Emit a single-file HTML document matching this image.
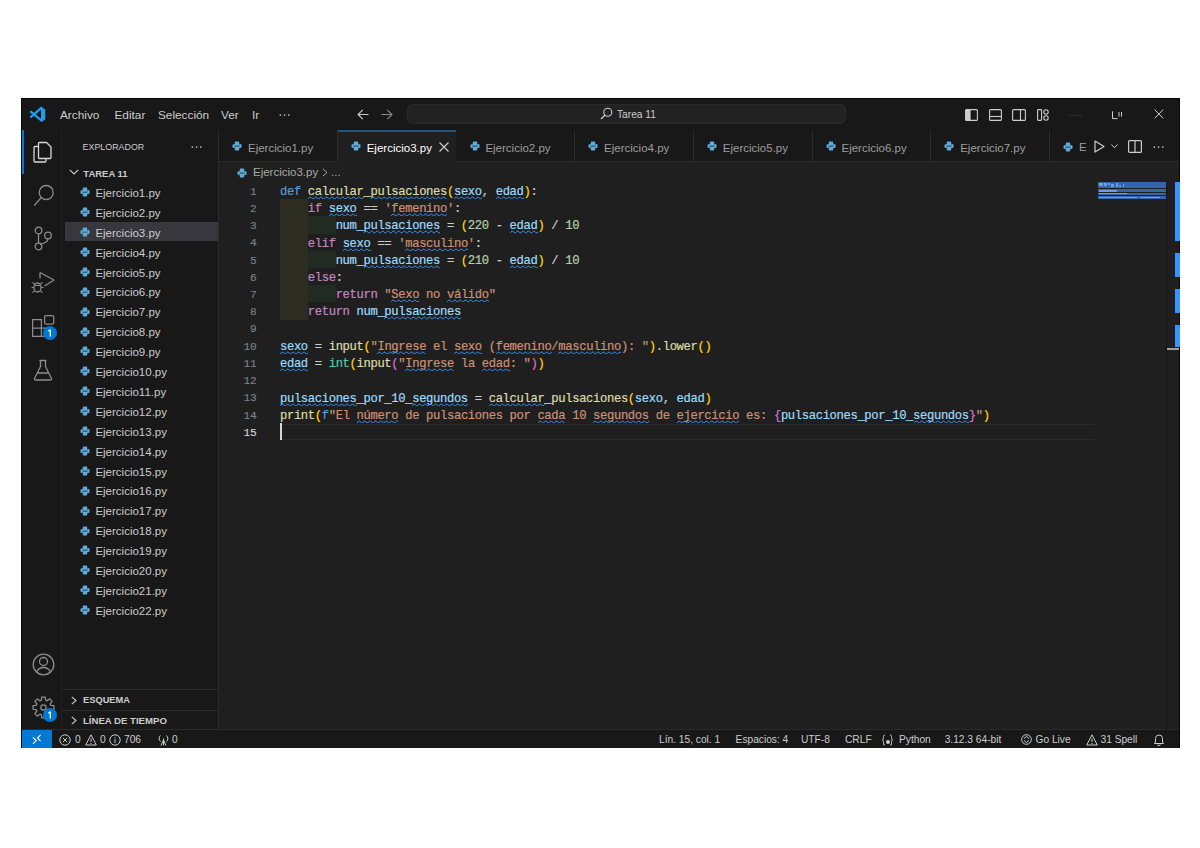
<!DOCTYPE html><html><head><meta charset="utf-8"><style>
*{margin:0;padding:0;box-sizing:border-box}
html,body{width:1200px;height:848px;background:#fff;overflow:hidden;position:relative}
body{font-family:"Liberation Sans",sans-serif;color:#cccccc}
.a{position:absolute}
.t{position:absolute;white-space:pre;line-height:1}
.code{position:absolute;white-space:pre;font-family:"Liberation Mono",monospace;font-size:12.2px;letter-spacing:-0.358px;line-height:17.21px;height:17.21px;-webkit-text-stroke:0.2px currentColor}
.sq{text-decoration:underline wavy #3794ff;text-decoration-thickness:1px;text-underline-offset:2px}
svg{position:absolute;overflow:visible}
.ln{font-size:11.2px;letter-spacing:-0.22px;-webkit-text-stroke:0.15px currentColor}
</style></head><body><div class="a" style="left:21px;top:98px;width:1159px;height:650px;background:#181818;border:1px solid #070707"></div><div class="a" style="left:219px;top:130px;width:960px;height:600px;background:#1f1f1f;"></div><div class="a" style="left:219px;top:130px;width:960px;height:32px;background:#181818;border-bottom:1px solid #2b2b2b"></div><div class="a" style="left:61px;top:130px;width:1px;height:600px;background:#202020;"></div><div class="a" style="left:218px;top:130px;width:1px;height:600px;background:#2b2b2b;"></div><div class="a" style="left:22px;top:729px;width:1157px;height:19px;background:#181818;border-top:1px solid #2b2b2b"></div><div class="a" style="left:22px;top:730px;width:30px;height:18px;background:#0078d4;"></div><svg style="left:25px;top:102px" width="30" height="25" viewBox="0 0 30 25"><path d="M16 5.3L20.2 7.2V17.8L16 19.7z" fill="#1f9cf0"/><path d="M6 9.8L16.6 18.7M6 14.8L16.4 5.8" stroke="#1f9cf0" stroke-width="2.2" stroke-linecap="round"/></svg><div class="t" style="left:60px;top:109.96px;font-size:11.8px;color:#cccccc;font-weight:400;letter-spacing:0px;">Archivo</div><div class="t" style="left:114.5px;top:109.96px;font-size:11.8px;color:#cccccc;font-weight:400;letter-spacing:0px;">Editar</div><div class="t" style="left:158px;top:109.96px;font-size:11.8px;color:#cccccc;font-weight:400;letter-spacing:0px;">Selección</div><div class="t" style="left:221px;top:109.96px;font-size:11.8px;color:#cccccc;font-weight:400;letter-spacing:0px;">Ver</div><div class="t" style="left:252px;top:109.96px;font-size:11.8px;color:#cccccc;font-weight:400;letter-spacing:0px;">Ir</div><svg style="left:278.5px;top:112.5px" width="11.1" height="4" viewBox="0 0 11.1 4"><circle cx="1.35" cy="2" r="0.85" fill="#cccccc"/><circle cx="5.550000000000001" cy="2" r="0.85" fill="#cccccc"/><circle cx="9.75" cy="2" r="0.85" fill="#cccccc"/></svg><svg style="left:357px;top:109px" width="12" height="11" viewBox="0 0 12 11"><path d="M11.5 5.5H1M5.8 0.8L1 5.5l4.8 4.7" stroke="#cccccc" stroke-width="1.1" fill="none"/></svg><svg style="left:381px;top:109px" width="12" height="11" viewBox="0 0 12 11"><path d="M0.5 5.5H11M6.2 0.8L11 5.5l-4.8 4.7" stroke="#8a8a8a" stroke-width="1.1" fill="none"/></svg><div class="a" style="left:407px;top:104px;width:439px;height:20px;background:#222222;border:1px solid #292929;border-radius:5px"></div><svg style="left:600px;top:107px" width="13" height="13" viewBox="0 0 13 13"><circle cx="7.8" cy="5.2" r="4" stroke="#cccccc" stroke-width="1.1" fill="none"/><path d="M5 8L1 12" stroke="#cccccc" stroke-width="1.2"/></svg><div class="t" style="left:617px;top:110.30px;font-size:10.2px;color:#cccccc;font-weight:400;letter-spacing:0px;">Tarea 11</div><svg style="left:965px;top:109px" width="13" height="12" viewBox="0 0 13 12"><rect x="0.6" y="0.6" width="11.8" height="10.8" rx="1" stroke="#cccccc" stroke-width="1.1" fill="none"/><rect x="0.6" y="0.6" width="5" height="10.8" fill="#cccccc"/></svg><svg style="left:989px;top:109px" width="13" height="12" viewBox="0 0 13 12"><rect x="0.6" y="0.6" width="11.8" height="10.8" rx="1" stroke="#cccccc" stroke-width="1.1" fill="none"/><path d="M0.6 7.5H12.4" stroke="#cccccc" stroke-width="1.1"/></svg><svg style="left:1012px;top:109px" width="14" height="12" viewBox="0 0 14 12"><rect x="0.6" y="0.6" width="12.8" height="10.8" rx="1" stroke="#cccccc" stroke-width="1.1" fill="none"/><path d="M8.5 0.6V11.4" stroke="#cccccc" stroke-width="1.1"/></svg><svg style="left:1037px;top:109px" width="12" height="12" viewBox="0 0 12 12"><rect x="0.6" y="0.6" width="4" height="10.8" rx="0.8" stroke="#cccccc" stroke-width="1.1" fill="none"/><circle cx="9" cy="3" r="2.2" stroke="#cccccc" stroke-width="1.1" fill="none"/><circle cx="9" cy="9" r="2.2" stroke="#cccccc" stroke-width="1.1" fill="none"/></svg><div class="a" style="left:1069px;top:115px;width:13px;height:1px;background:#2e2e2e;"></div><svg style="left:1110px;top:109px" width="14" height="12" viewBox="0 0 14 12"><path d="M2.5 2.3V9.6H7.6M9 3v4.6M11.5 3v4.6" stroke="#d0d0d0" stroke-width="1" fill="none"/></svg><svg style="left:1154px;top:109px" width="10" height="10" viewBox="0 0 10 10"><path d="M0.6 0.6L9.2 9.4M9.2 0.6L0.6 9.4" stroke="#cfcfcf" stroke-width="1" fill="none"/></svg><div class="a" style="left:22px;top:130px;width:2px;height:44px;background:#0078d4;"></div><svg style="left:33px;top:141px" width="20" height="22" viewBox="0 0 20 22"><path d="M6.5 1.5h7l4.5 4.5v10.5a1 1 0 0 1-1 1h-10.5a1 1 0 0 1-1-1v-14a1 1 0 0 1 1-1z" stroke="#d7d7d7" stroke-width="1.3" fill="none"/><path d="M5.5 5.5h-3.5a1 1 0 0 0-1 1v13.5a1 1 0 0 0 1 1h10a1 1 0 0 0 1-1v-2.5" stroke="#d7d7d7" stroke-width="1.3" fill="none"/></svg><svg style="left:33px;top:184px" width="22" height="24" viewBox="0 0 22 24"><circle cx="13.2" cy="8.5" r="7" stroke="#8c8c8c" stroke-width="1.3" fill="none"/><path d="M8.2 13.6L1.2 21.6" stroke="#8c8c8c" stroke-width="1.4"/></svg><svg style="left:33px;top:226px" width="20" height="26" viewBox="0 0 20 26"><circle cx="5.5" cy="4.5" r="3.3" stroke="#8c8c8c" stroke-width="1.3" fill="none"/><circle cx="5.5" cy="20.5" r="3.3" stroke="#8c8c8c" stroke-width="1.3" fill="none"/><circle cx="15" cy="9.5" r="3.3" stroke="#8c8c8c" stroke-width="1.3" fill="none"/><path d="M5.5 7.8V17.2M15 12.8c0 3-3 4.5-8 5.5" stroke="#8c8c8c" stroke-width="1.3" fill="none"/></svg><svg style="left:31px;top:271px" width="25" height="24" viewBox="0 0 25 24"><path d="M9 1.5L23 9l-9.5 6" stroke="#8c8c8c" stroke-width="1.3" fill="none" stroke-linejoin="round"/><path d="M9 1.5v6" stroke="#8c8c8c" stroke-width="1.3"/><ellipse cx="6.5" cy="16.5" rx="3.5" ry="4.5" stroke="#8c8c8c" stroke-width="1.3" fill="none"/><path d="M3 16.5H0.5M10 16.5h2.5M3.5 13l-2-1.5M9.5 13l2-1.5M3.5 20l-2 1.5M9.5 20l2 1.5M3 14.5h7" stroke="#8c8c8c" stroke-width="1.2" fill="none"/></svg><svg style="left:31px;top:314px" width="25" height="24" viewBox="0 0 25 24"><path d="M1.6 5.6h8.8v8.4H1.6zM1.6 14h8.8v8.4H1.6zM10.4 14h4v8.4h-4" stroke="#8c8c8c" stroke-width="1.25" fill="none"/><rect x="13.6" y="1.6" width="9.2" height="8.4" rx="1.2" stroke="#8c8c8c" stroke-width="1.25" fill="none"/></svg><div class="a" style="left:42.90px;top:325.90px;width:14.4px;height:14.4px;border-radius:50%;background:#0078d4"></div><svg style="left:47.10px;top:329.10px" width="6" height="8" viewBox="0 0 6 8"><path d="M3.3 0.6V7.6M3.3 0.8L1.3 2.3" stroke="#ffffff" stroke-width="1.3" fill="none"/></svg><svg style="left:33px;top:359px" width="20" height="22" viewBox="0 0 20 22"><path d="M6.5 1.5h7M7.5 1.5v6L1.5 19.5a1 1 0 0 0 .9 1.5h15.2a1 1 0 0 0 .9-1.5L12.5 7.5v-6M4.5 14h11" stroke="#8c8c8c" stroke-width="1.3" fill="none" stroke-linejoin="round"/></svg><svg style="left:32px;top:653px" width="23" height="23" viewBox="0 0 23 23"><circle cx="11.5" cy="11.5" r="10.3" stroke="#8c8c8c" stroke-width="1.3" fill="none"/><circle cx="11.5" cy="8.5" r="4" stroke="#8c8c8c" stroke-width="1.3" fill="none"/><path d="M4.5 19c1.5-3 4-4.5 7-4.5s5.5 1.5 7 4.5" stroke="#8c8c8c" stroke-width="1.3" fill="none"/></svg><svg style="left:31.7px;top:696px" width="23" height="23" viewBox="0 0 23 23"><path d="M18.80 9.40 L21.95 9.71 L21.95 13.29 L18.80 13.60 L18.15 15.18 L20.16 17.62 L17.62 20.16 L15.18 18.15 L13.60 18.80 L13.29 21.95 L9.71 21.95 L9.40 18.80 L7.82 18.15 L5.38 20.16 L2.84 17.62 L4.85 15.18 L4.20 13.60 L1.05 13.29 L1.05 9.71 L4.20 9.40 L4.85 7.82 L2.84 5.38 L5.38 2.84 L7.82 4.85 L9.40 4.20 L9.71 1.05 L13.29 1.05 L13.60 4.20 L15.18 4.85 L17.62 2.84 L20.16 5.38 L18.15 7.82Z" stroke="#8c8c8c" stroke-width="1.3" fill="none" stroke-linejoin="round"/><circle cx="11.5" cy="11.5" r="2.7" stroke="#8c8c8c" stroke-width="1.3" fill="none"/></svg><div class="a" style="left:42.90px;top:707.90px;width:14.4px;height:14.4px;border-radius:50%;background:#0078d4"></div><svg style="left:47.10px;top:711.10px" width="6" height="8" viewBox="0 0 6 8"><path d="M3.3 0.6V7.6M3.3 0.8L1.3 2.3" stroke="#ffffff" stroke-width="1.3" fill="none"/></svg><div class="t" style="left:82.6px;top:143.47px;font-size:8.9px;color:#cccccc;font-weight:400;letter-spacing:0px;">EXPLORADOR</div><svg style="left:191px;top:145px" width="11.1" height="4" viewBox="0 0 11.1 4"><circle cx="1.35" cy="2" r="0.85" fill="#cccccc"/><circle cx="5.550000000000001" cy="2" r="0.85" fill="#cccccc"/><circle cx="9.75" cy="2" r="0.85" fill="#cccccc"/></svg><svg style="left:69px;top:169px" width="10" height="6" viewBox="0 0 10 6"><path d="M0.8 0.8L5 5 9.2 0.8" stroke="#cccccc" stroke-width="1.1" fill="none"/></svg><div class="t" style="left:83.3px;top:168.56px;font-size:9.5px;color:#cccccc;font-weight:700;letter-spacing:0px;">TAREA 11</div><div class="a" style="left:65px;top:221.7px;width:153px;height:19px;background:#37373d;"></div><svg style="left:80px;top:187.2px" width="10" height="10" viewBox="0 0 16 16"><path fill="#5fabd9" d="M6 0.8H10Q11.6 0.8 11.6 2.4V7.4H4.2V9.6Q4.2 11.1 2.7 11.1H2.4Q0.8 11.1 0.8 9.5V6.6Q0.8 5 2.4 5H4.4V2.4Q4.4 0.8 6 0.8ZM10 15.2H6Q4.4 15.2 4.4 13.6V8.6H11.8V6.4Q11.8 4.9 13.3 4.9H13.6Q15.2 4.9 15.2 6.5V9.4Q15.2 11 13.6 11H11.6V13.6Q11.6 15.2 10 15.2Z"/></svg><div class="t" style="left:95.4px;top:187.92px;font-size:11.5px;color:#cccccc;font-weight:400;letter-spacing:0px;">Ejercicio1.py</div><svg style="left:80px;top:207.1px" width="10" height="10" viewBox="0 0 16 16"><path fill="#5fabd9" d="M6 0.8H10Q11.6 0.8 11.6 2.4V7.4H4.2V9.6Q4.2 11.1 2.7 11.1H2.4Q0.8 11.1 0.8 9.5V6.6Q0.8 5 2.4 5H4.4V2.4Q4.4 0.8 6 0.8ZM10 15.2H6Q4.4 15.2 4.4 13.6V8.6H11.8V6.4Q11.8 4.9 13.3 4.9H13.6Q15.2 4.9 15.2 6.5V9.4Q15.2 11 13.6 11H11.6V13.6Q11.6 15.2 10 15.2Z"/></svg><div class="t" style="left:95.4px;top:207.82px;font-size:11.5px;color:#cccccc;font-weight:400;letter-spacing:0px;">Ejercicio2.py</div><svg style="left:80px;top:227.0px" width="10" height="10" viewBox="0 0 16 16"><path fill="#5fabd9" d="M6 0.8H10Q11.6 0.8 11.6 2.4V7.4H4.2V9.6Q4.2 11.1 2.7 11.1H2.4Q0.8 11.1 0.8 9.5V6.6Q0.8 5 2.4 5H4.4V2.4Q4.4 0.8 6 0.8ZM10 15.2H6Q4.4 15.2 4.4 13.6V8.6H11.8V6.4Q11.8 4.9 13.3 4.9H13.6Q15.2 4.9 15.2 6.5V9.4Q15.2 11 13.6 11H11.6V13.6Q11.6 15.2 10 15.2Z"/></svg><div class="t" style="left:95.4px;top:227.72px;font-size:11.5px;color:#cccccc;font-weight:400;letter-spacing:0px;">Ejercicio3.py</div><svg style="left:80px;top:246.89999999999998px" width="10" height="10" viewBox="0 0 16 16"><path fill="#5fabd9" d="M6 0.8H10Q11.6 0.8 11.6 2.4V7.4H4.2V9.6Q4.2 11.1 2.7 11.1H2.4Q0.8 11.1 0.8 9.5V6.6Q0.8 5 2.4 5H4.4V2.4Q4.4 0.8 6 0.8ZM10 15.2H6Q4.4 15.2 4.4 13.6V8.6H11.8V6.4Q11.8 4.9 13.3 4.9H13.6Q15.2 4.9 15.2 6.5V9.4Q15.2 11 13.6 11H11.6V13.6Q11.6 15.2 10 15.2Z"/></svg><div class="t" style="left:95.4px;top:247.62px;font-size:11.5px;color:#cccccc;font-weight:400;letter-spacing:0px;">Ejercicio4.py</div><svg style="left:80px;top:266.79999999999995px" width="10" height="10" viewBox="0 0 16 16"><path fill="#5fabd9" d="M6 0.8H10Q11.6 0.8 11.6 2.4V7.4H4.2V9.6Q4.2 11.1 2.7 11.1H2.4Q0.8 11.1 0.8 9.5V6.6Q0.8 5 2.4 5H4.4V2.4Q4.4 0.8 6 0.8ZM10 15.2H6Q4.4 15.2 4.4 13.6V8.6H11.8V6.4Q11.8 4.9 13.3 4.9H13.6Q15.2 4.9 15.2 6.5V9.4Q15.2 11 13.6 11H11.6V13.6Q11.6 15.2 10 15.2Z"/></svg><div class="t" style="left:95.4px;top:267.52px;font-size:11.5px;color:#cccccc;font-weight:400;letter-spacing:0px;">Ejercicio5.py</div><svg style="left:80px;top:286.7px" width="10" height="10" viewBox="0 0 16 16"><path fill="#5fabd9" d="M6 0.8H10Q11.6 0.8 11.6 2.4V7.4H4.2V9.6Q4.2 11.1 2.7 11.1H2.4Q0.8 11.1 0.8 9.5V6.6Q0.8 5 2.4 5H4.4V2.4Q4.4 0.8 6 0.8ZM10 15.2H6Q4.4 15.2 4.4 13.6V8.6H11.8V6.4Q11.8 4.9 13.3 4.9H13.6Q15.2 4.9 15.2 6.5V9.4Q15.2 11 13.6 11H11.6V13.6Q11.6 15.2 10 15.2Z"/></svg><div class="t" style="left:95.4px;top:287.42px;font-size:11.5px;color:#cccccc;font-weight:400;letter-spacing:0px;">Ejercicio6.py</div><svg style="left:80px;top:306.59999999999997px" width="10" height="10" viewBox="0 0 16 16"><path fill="#5fabd9" d="M6 0.8H10Q11.6 0.8 11.6 2.4V7.4H4.2V9.6Q4.2 11.1 2.7 11.1H2.4Q0.8 11.1 0.8 9.5V6.6Q0.8 5 2.4 5H4.4V2.4Q4.4 0.8 6 0.8ZM10 15.2H6Q4.4 15.2 4.4 13.6V8.6H11.8V6.4Q11.8 4.9 13.3 4.9H13.6Q15.2 4.9 15.2 6.5V9.4Q15.2 11 13.6 11H11.6V13.6Q11.6 15.2 10 15.2Z"/></svg><div class="t" style="left:95.4px;top:307.32px;font-size:11.5px;color:#cccccc;font-weight:400;letter-spacing:0px;">Ejercicio7.py</div><svg style="left:80px;top:326.5px" width="10" height="10" viewBox="0 0 16 16"><path fill="#5fabd9" d="M6 0.8H10Q11.6 0.8 11.6 2.4V7.4H4.2V9.6Q4.2 11.1 2.7 11.1H2.4Q0.8 11.1 0.8 9.5V6.6Q0.8 5 2.4 5H4.4V2.4Q4.4 0.8 6 0.8ZM10 15.2H6Q4.4 15.2 4.4 13.6V8.6H11.8V6.4Q11.8 4.9 13.3 4.9H13.6Q15.2 4.9 15.2 6.5V9.4Q15.2 11 13.6 11H11.6V13.6Q11.6 15.2 10 15.2Z"/></svg><div class="t" style="left:95.4px;top:327.22px;font-size:11.5px;color:#cccccc;font-weight:400;letter-spacing:0px;">Ejercicio8.py</div><svg style="left:80px;top:346.4px" width="10" height="10" viewBox="0 0 16 16"><path fill="#5fabd9" d="M6 0.8H10Q11.6 0.8 11.6 2.4V7.4H4.2V9.6Q4.2 11.1 2.7 11.1H2.4Q0.8 11.1 0.8 9.5V6.6Q0.8 5 2.4 5H4.4V2.4Q4.4 0.8 6 0.8ZM10 15.2H6Q4.4 15.2 4.4 13.6V8.6H11.8V6.4Q11.8 4.9 13.3 4.9H13.6Q15.2 4.9 15.2 6.5V9.4Q15.2 11 13.6 11H11.6V13.6Q11.6 15.2 10 15.2Z"/></svg><div class="t" style="left:95.4px;top:347.12px;font-size:11.5px;color:#cccccc;font-weight:400;letter-spacing:0px;">Ejercicio9.py</div><svg style="left:80px;top:366.29999999999995px" width="10" height="10" viewBox="0 0 16 16"><path fill="#5fabd9" d="M6 0.8H10Q11.6 0.8 11.6 2.4V7.4H4.2V9.6Q4.2 11.1 2.7 11.1H2.4Q0.8 11.1 0.8 9.5V6.6Q0.8 5 2.4 5H4.4V2.4Q4.4 0.8 6 0.8ZM10 15.2H6Q4.4 15.2 4.4 13.6V8.6H11.8V6.4Q11.8 4.9 13.3 4.9H13.6Q15.2 4.9 15.2 6.5V9.4Q15.2 11 13.6 11H11.6V13.6Q11.6 15.2 10 15.2Z"/></svg><div class="t" style="left:95.4px;top:367.02px;font-size:11.5px;color:#cccccc;font-weight:400;letter-spacing:0px;">Ejercicio10.py</div><svg style="left:80px;top:386.2px" width="10" height="10" viewBox="0 0 16 16"><path fill="#5fabd9" d="M6 0.8H10Q11.6 0.8 11.6 2.4V7.4H4.2V9.6Q4.2 11.1 2.7 11.1H2.4Q0.8 11.1 0.8 9.5V6.6Q0.8 5 2.4 5H4.4V2.4Q4.4 0.8 6 0.8ZM10 15.2H6Q4.4 15.2 4.4 13.6V8.6H11.8V6.4Q11.8 4.9 13.3 4.9H13.6Q15.2 4.9 15.2 6.5V9.4Q15.2 11 13.6 11H11.6V13.6Q11.6 15.2 10 15.2Z"/></svg><div class="t" style="left:95.4px;top:386.92px;font-size:11.5px;color:#cccccc;font-weight:400;letter-spacing:0px;">Ejercicio11.py</div><svg style="left:80px;top:406.09999999999997px" width="10" height="10" viewBox="0 0 16 16"><path fill="#5fabd9" d="M6 0.8H10Q11.6 0.8 11.6 2.4V7.4H4.2V9.6Q4.2 11.1 2.7 11.1H2.4Q0.8 11.1 0.8 9.5V6.6Q0.8 5 2.4 5H4.4V2.4Q4.4 0.8 6 0.8ZM10 15.2H6Q4.4 15.2 4.4 13.6V8.6H11.8V6.4Q11.8 4.9 13.3 4.9H13.6Q15.2 4.9 15.2 6.5V9.4Q15.2 11 13.6 11H11.6V13.6Q11.6 15.2 10 15.2Z"/></svg><div class="t" style="left:95.4px;top:406.82px;font-size:11.5px;color:#cccccc;font-weight:400;letter-spacing:0px;">Ejercicio12.py</div><svg style="left:80px;top:426.0px" width="10" height="10" viewBox="0 0 16 16"><path fill="#5fabd9" d="M6 0.8H10Q11.6 0.8 11.6 2.4V7.4H4.2V9.6Q4.2 11.1 2.7 11.1H2.4Q0.8 11.1 0.8 9.5V6.6Q0.8 5 2.4 5H4.4V2.4Q4.4 0.8 6 0.8ZM10 15.2H6Q4.4 15.2 4.4 13.6V8.6H11.8V6.4Q11.8 4.9 13.3 4.9H13.6Q15.2 4.9 15.2 6.5V9.4Q15.2 11 13.6 11H11.6V13.6Q11.6 15.2 10 15.2Z"/></svg><div class="t" style="left:95.4px;top:426.72px;font-size:11.5px;color:#cccccc;font-weight:400;letter-spacing:0px;">Ejercicio13.py</div><svg style="left:80px;top:445.9px" width="10" height="10" viewBox="0 0 16 16"><path fill="#5fabd9" d="M6 0.8H10Q11.6 0.8 11.6 2.4V7.4H4.2V9.6Q4.2 11.1 2.7 11.1H2.4Q0.8 11.1 0.8 9.5V6.6Q0.8 5 2.4 5H4.4V2.4Q4.4 0.8 6 0.8ZM10 15.2H6Q4.4 15.2 4.4 13.6V8.6H11.8V6.4Q11.8 4.9 13.3 4.9H13.6Q15.2 4.9 15.2 6.5V9.4Q15.2 11 13.6 11H11.6V13.6Q11.6 15.2 10 15.2Z"/></svg><div class="t" style="left:95.4px;top:446.62px;font-size:11.5px;color:#cccccc;font-weight:400;letter-spacing:0px;">Ejercicio14.py</div><svg style="left:80px;top:465.79999999999995px" width="10" height="10" viewBox="0 0 16 16"><path fill="#5fabd9" d="M6 0.8H10Q11.6 0.8 11.6 2.4V7.4H4.2V9.6Q4.2 11.1 2.7 11.1H2.4Q0.8 11.1 0.8 9.5V6.6Q0.8 5 2.4 5H4.4V2.4Q4.4 0.8 6 0.8ZM10 15.2H6Q4.4 15.2 4.4 13.6V8.6H11.8V6.4Q11.8 4.9 13.3 4.9H13.6Q15.2 4.9 15.2 6.5V9.4Q15.2 11 13.6 11H11.6V13.6Q11.6 15.2 10 15.2Z"/></svg><div class="t" style="left:95.4px;top:466.52px;font-size:11.5px;color:#cccccc;font-weight:400;letter-spacing:0px;">Ejercicio15.py</div><svg style="left:80px;top:485.7px" width="10" height="10" viewBox="0 0 16 16"><path fill="#5fabd9" d="M6 0.8H10Q11.6 0.8 11.6 2.4V7.4H4.2V9.6Q4.2 11.1 2.7 11.1H2.4Q0.8 11.1 0.8 9.5V6.6Q0.8 5 2.4 5H4.4V2.4Q4.4 0.8 6 0.8ZM10 15.2H6Q4.4 15.2 4.4 13.6V8.6H11.8V6.4Q11.8 4.9 13.3 4.9H13.6Q15.2 4.9 15.2 6.5V9.4Q15.2 11 13.6 11H11.6V13.6Q11.6 15.2 10 15.2Z"/></svg><div class="t" style="left:95.4px;top:486.42px;font-size:11.5px;color:#cccccc;font-weight:400;letter-spacing:0px;">Ejercicio16.py</div><svg style="left:80px;top:505.59999999999997px" width="10" height="10" viewBox="0 0 16 16"><path fill="#5fabd9" d="M6 0.8H10Q11.6 0.8 11.6 2.4V7.4H4.2V9.6Q4.2 11.1 2.7 11.1H2.4Q0.8 11.1 0.8 9.5V6.6Q0.8 5 2.4 5H4.4V2.4Q4.4 0.8 6 0.8ZM10 15.2H6Q4.4 15.2 4.4 13.6V8.6H11.8V6.4Q11.8 4.9 13.3 4.9H13.6Q15.2 4.9 15.2 6.5V9.4Q15.2 11 13.6 11H11.6V13.6Q11.6 15.2 10 15.2Z"/></svg><div class="t" style="left:95.4px;top:506.32px;font-size:11.5px;color:#cccccc;font-weight:400;letter-spacing:0px;">Ejercicio17.py</div><svg style="left:80px;top:525.5px" width="10" height="10" viewBox="0 0 16 16"><path fill="#5fabd9" d="M6 0.8H10Q11.6 0.8 11.6 2.4V7.4H4.2V9.6Q4.2 11.1 2.7 11.1H2.4Q0.8 11.1 0.8 9.5V6.6Q0.8 5 2.4 5H4.4V2.4Q4.4 0.8 6 0.8ZM10 15.2H6Q4.4 15.2 4.4 13.6V8.6H11.8V6.4Q11.8 4.9 13.3 4.9H13.6Q15.2 4.9 15.2 6.5V9.4Q15.2 11 13.6 11H11.6V13.6Q11.6 15.2 10 15.2Z"/></svg><div class="t" style="left:95.4px;top:526.22px;font-size:11.5px;color:#cccccc;font-weight:400;letter-spacing:0px;">Ejercicio18.py</div><svg style="left:80px;top:545.4px" width="10" height="10" viewBox="0 0 16 16"><path fill="#5fabd9" d="M6 0.8H10Q11.6 0.8 11.6 2.4V7.4H4.2V9.6Q4.2 11.1 2.7 11.1H2.4Q0.8 11.1 0.8 9.5V6.6Q0.8 5 2.4 5H4.4V2.4Q4.4 0.8 6 0.8ZM10 15.2H6Q4.4 15.2 4.4 13.6V8.6H11.8V6.4Q11.8 4.9 13.3 4.9H13.6Q15.2 4.9 15.2 6.5V9.4Q15.2 11 13.6 11H11.6V13.6Q11.6 15.2 10 15.2Z"/></svg><div class="t" style="left:95.4px;top:546.12px;font-size:11.5px;color:#cccccc;font-weight:400;letter-spacing:0px;">Ejercicio19.py</div><svg style="left:80px;top:565.3px" width="10" height="10" viewBox="0 0 16 16"><path fill="#5fabd9" d="M6 0.8H10Q11.6 0.8 11.6 2.4V7.4H4.2V9.6Q4.2 11.1 2.7 11.1H2.4Q0.8 11.1 0.8 9.5V6.6Q0.8 5 2.4 5H4.4V2.4Q4.4 0.8 6 0.8ZM10 15.2H6Q4.4 15.2 4.4 13.6V8.6H11.8V6.4Q11.8 4.9 13.3 4.9H13.6Q15.2 4.9 15.2 6.5V9.4Q15.2 11 13.6 11H11.6V13.6Q11.6 15.2 10 15.2Z"/></svg><div class="t" style="left:95.4px;top:566.02px;font-size:11.5px;color:#cccccc;font-weight:400;letter-spacing:0px;">Ejercicio20.py</div><svg style="left:80px;top:585.2px" width="10" height="10" viewBox="0 0 16 16"><path fill="#5fabd9" d="M6 0.8H10Q11.6 0.8 11.6 2.4V7.4H4.2V9.6Q4.2 11.1 2.7 11.1H2.4Q0.8 11.1 0.8 9.5V6.6Q0.8 5 2.4 5H4.4V2.4Q4.4 0.8 6 0.8ZM10 15.2H6Q4.4 15.2 4.4 13.6V8.6H11.8V6.4Q11.8 4.9 13.3 4.9H13.6Q15.2 4.9 15.2 6.5V9.4Q15.2 11 13.6 11H11.6V13.6Q11.6 15.2 10 15.2Z"/></svg><div class="t" style="left:95.4px;top:585.92px;font-size:11.5px;color:#cccccc;font-weight:400;letter-spacing:0px;">Ejercicio21.py</div><svg style="left:80px;top:605.0999999999999px" width="10" height="10" viewBox="0 0 16 16"><path fill="#5fabd9" d="M6 0.8H10Q11.6 0.8 11.6 2.4V7.4H4.2V9.6Q4.2 11.1 2.7 11.1H2.4Q0.8 11.1 0.8 9.5V6.6Q0.8 5 2.4 5H4.4V2.4Q4.4 0.8 6 0.8ZM10 15.2H6Q4.4 15.2 4.4 13.6V8.6H11.8V6.4Q11.8 4.9 13.3 4.9H13.6Q15.2 4.9 15.2 6.5V9.4Q15.2 11 13.6 11H11.6V13.6Q11.6 15.2 10 15.2Z"/></svg><div class="t" style="left:95.4px;top:605.82px;font-size:11.5px;color:#cccccc;font-weight:400;letter-spacing:0px;">Ejercicio22.py</div><div class="a" style="left:62px;top:688.5px;width:156px;height:1px;background:#2b2b2b;"></div><div class="a" style="left:62px;top:709.5px;width:156px;height:1px;background:#2b2b2b;"></div><svg style="left:71px;top:696px" width="6" height="9" viewBox="0 0 6 9"><path d="M0.8 0.8L5 4.5 0.8 8.2" stroke="#cccccc" stroke-width="1.1" fill="none"/></svg><div class="t" style="left:83px;top:696.26px;font-size:9.3px;color:#cccccc;font-weight:700;letter-spacing:0px;">ESQUEMA</div><svg style="left:71px;top:716px" width="6" height="9" viewBox="0 0 6 9"><path d="M0.8 0.8L5 4.5 0.8 8.2" stroke="#cccccc" stroke-width="1.1" fill="none"/></svg><div class="t" style="left:83px;top:716.11px;font-size:9.6px;color:#cccccc;font-weight:700;letter-spacing:0px;">LÍNEA DE TIEMPO</div><div class="a" style="left:336.7px;top:130px;width:1px;height:31px;background:#2b2b2b;"></div><svg style="left:232.2px;top:141px" width="10" height="10" viewBox="0 0 16 16"><path fill="#5fabd9" d="M6 0.8H10Q11.6 0.8 11.6 2.4V7.4H4.2V9.6Q4.2 11.1 2.7 11.1H2.4Q0.8 11.1 0.8 9.5V6.6Q0.8 5 2.4 5H4.4V2.4Q4.4 0.8 6 0.8ZM10 15.2H6Q4.4 15.2 4.4 13.6V8.6H11.8V6.4Q11.8 4.9 13.3 4.9H13.6Q15.2 4.9 15.2 6.5V9.4Q15.2 11 13.6 11H11.6V13.6Q11.6 15.2 10 15.2Z"/></svg><div class="t" style="left:248.0px;top:142.72px;font-size:11.5px;color:#9d9d9d;font-weight:400;letter-spacing:0px;">Ejercicio1.py</div><div class="a" style="left:337.7px;top:130px;width:118.7px;height:32px;background:#1f1f1f;"></div><div class="a" style="left:337.7px;top:129.6px;width:118.7px;height:2.2px;background:#265479;"></div><svg style="left:350.9px;top:141px" width="10" height="10" viewBox="0 0 16 16"><path fill="#5fabd9" d="M6 0.8H10Q11.6 0.8 11.6 2.4V7.4H4.2V9.6Q4.2 11.1 2.7 11.1H2.4Q0.8 11.1 0.8 9.5V6.6Q0.8 5 2.4 5H4.4V2.4Q4.4 0.8 6 0.8ZM10 15.2H6Q4.4 15.2 4.4 13.6V8.6H11.8V6.4Q11.8 4.9 13.3 4.9H13.6Q15.2 4.9 15.2 6.5V9.4Q15.2 11 13.6 11H11.6V13.6Q11.6 15.2 10 15.2Z"/></svg><div class="t" style="left:366.7px;top:142.72px;font-size:11.5px;color:#ffffff;font-weight:400;letter-spacing:0px;">Ejercicio3.py</div><svg style="left:439.2px;top:142px" width="10" height="10" viewBox="0 0 10 10"><path d="M0.5 0.5L9.5 9.5M9.5 0.5L0.5 9.5" stroke="#cccccc" stroke-width="1.2"/></svg><div class="a" style="left:574.1px;top:130px;width:1px;height:31px;background:#2b2b2b;"></div><svg style="left:469.59999999999997px;top:141px" width="10" height="10" viewBox="0 0 16 16"><path fill="#5fabd9" d="M6 0.8H10Q11.6 0.8 11.6 2.4V7.4H4.2V9.6Q4.2 11.1 2.7 11.1H2.4Q0.8 11.1 0.8 9.5V6.6Q0.8 5 2.4 5H4.4V2.4Q4.4 0.8 6 0.8ZM10 15.2H6Q4.4 15.2 4.4 13.6V8.6H11.8V6.4Q11.8 4.9 13.3 4.9H13.6Q15.2 4.9 15.2 6.5V9.4Q15.2 11 13.6 11H11.6V13.6Q11.6 15.2 10 15.2Z"/></svg><div class="t" style="left:485.4px;top:142.72px;font-size:11.5px;color:#9d9d9d;font-weight:400;letter-spacing:0px;">Ejercicio2.py</div><div class="a" style="left:692.8000000000001px;top:130px;width:1px;height:31px;background:#2b2b2b;"></div><svg style="left:588.3000000000001px;top:141px" width="10" height="10" viewBox="0 0 16 16"><path fill="#5fabd9" d="M6 0.8H10Q11.6 0.8 11.6 2.4V7.4H4.2V9.6Q4.2 11.1 2.7 11.1H2.4Q0.8 11.1 0.8 9.5V6.6Q0.8 5 2.4 5H4.4V2.4Q4.4 0.8 6 0.8ZM10 15.2H6Q4.4 15.2 4.4 13.6V8.6H11.8V6.4Q11.8 4.9 13.3 4.9H13.6Q15.2 4.9 15.2 6.5V9.4Q15.2 11 13.6 11H11.6V13.6Q11.6 15.2 10 15.2Z"/></svg><div class="t" style="left:604.1px;top:142.72px;font-size:11.5px;color:#9d9d9d;font-weight:400;letter-spacing:0px;">Ejercicio4.py</div><div class="a" style="left:811.5px;top:130px;width:1px;height:31px;background:#2b2b2b;"></div><svg style="left:707.0px;top:141px" width="10" height="10" viewBox="0 0 16 16"><path fill="#5fabd9" d="M6 0.8H10Q11.6 0.8 11.6 2.4V7.4H4.2V9.6Q4.2 11.1 2.7 11.1H2.4Q0.8 11.1 0.8 9.5V6.6Q0.8 5 2.4 5H4.4V2.4Q4.4 0.8 6 0.8ZM10 15.2H6Q4.4 15.2 4.4 13.6V8.6H11.8V6.4Q11.8 4.9 13.3 4.9H13.6Q15.2 4.9 15.2 6.5V9.4Q15.2 11 13.6 11H11.6V13.6Q11.6 15.2 10 15.2Z"/></svg><div class="t" style="left:722.8px;top:142.72px;font-size:11.5px;color:#9d9d9d;font-weight:400;letter-spacing:0px;">Ejercicio5.py</div><div class="a" style="left:930.2px;top:130px;width:1px;height:31px;background:#2b2b2b;"></div><svg style="left:825.7px;top:141px" width="10" height="10" viewBox="0 0 16 16"><path fill="#5fabd9" d="M6 0.8H10Q11.6 0.8 11.6 2.4V7.4H4.2V9.6Q4.2 11.1 2.7 11.1H2.4Q0.8 11.1 0.8 9.5V6.6Q0.8 5 2.4 5H4.4V2.4Q4.4 0.8 6 0.8ZM10 15.2H6Q4.4 15.2 4.4 13.6V8.6H11.8V6.4Q11.8 4.9 13.3 4.9H13.6Q15.2 4.9 15.2 6.5V9.4Q15.2 11 13.6 11H11.6V13.6Q11.6 15.2 10 15.2Z"/></svg><div class="t" style="left:841.5px;top:142.72px;font-size:11.5px;color:#9d9d9d;font-weight:400;letter-spacing:0px;">Ejercicio6.py</div><div class="a" style="left:1048.9px;top:130px;width:1px;height:31px;background:#2b2b2b;"></div><svg style="left:944.4000000000001px;top:141px" width="10" height="10" viewBox="0 0 16 16"><path fill="#5fabd9" d="M6 0.8H10Q11.6 0.8 11.6 2.4V7.4H4.2V9.6Q4.2 11.1 2.7 11.1H2.4Q0.8 11.1 0.8 9.5V6.6Q0.8 5 2.4 5H4.4V2.4Q4.4 0.8 6 0.8ZM10 15.2H6Q4.4 15.2 4.4 13.6V8.6H11.8V6.4Q11.8 4.9 13.3 4.9H13.6Q15.2 4.9 15.2 6.5V9.4Q15.2 11 13.6 11H11.6V13.6Q11.6 15.2 10 15.2Z"/></svg><div class="t" style="left:960.2px;top:142.72px;font-size:11.5px;color:#9d9d9d;font-weight:400;letter-spacing:0px;">Ejercicio7.py</div><div class="a" style="left:336.7px;top:130px;width:1px;height:31px;background:#2b2b2b;"></div><svg style="left:1063px;top:142px" width="10" height="10" viewBox="0 0 16 16"><path fill="#5fabd9" d="M6 0.8H10Q11.6 0.8 11.6 2.4V7.4H4.2V9.6Q4.2 11.1 2.7 11.1H2.4Q0.8 11.1 0.8 9.5V6.6Q0.8 5 2.4 5H4.4V2.4Q4.4 0.8 6 0.8ZM10 15.2H6Q4.4 15.2 4.4 13.6V8.6H11.8V6.4Q11.8 4.9 13.3 4.9H13.6Q15.2 4.9 15.2 6.5V9.4Q15.2 11 13.6 11H11.6V13.6Q11.6 15.2 10 15.2Z"/></svg><div class="t" style="left:1079px;top:142.12px;font-size:11.5px;color:#9d9d9d;font-weight:400;letter-spacing:0px;">E</div><svg style="left:1094px;top:140px" width="11" height="13" viewBox="0 0 11 13"><path d="M1 1L10 6.5 1 12z" stroke="#cccccc" stroke-width="1.2" fill="none" stroke-linejoin="round"/></svg><svg style="left:1111px;top:144px" width="7" height="5" viewBox="0 0 7 5"><path d="M0.5 0.5L3.5 3.8 6.5 0.5" stroke="#cccccc" stroke-width="1" fill="none"/></svg><svg style="left:1128px;top:140px" width="14" height="13" viewBox="0 0 14 13"><rect x="0.6" y="0.6" width="12.8" height="11.8" rx="1" stroke="#cccccc" stroke-width="1.2" fill="none"/><path d="M7 0.6V12.4" stroke="#cccccc" stroke-width="1.2"/></svg><svg style="left:1152.5px;top:145px" width="11.1" height="4" viewBox="0 0 11.1 4"><circle cx="1.35" cy="2" r="0.85" fill="#cccccc"/><circle cx="5.550000000000001" cy="2" r="0.85" fill="#cccccc"/><circle cx="9.75" cy="2" r="0.85" fill="#cccccc"/></svg><svg style="left:237px;top:167.5px" width="10" height="10" viewBox="0 0 16 16"><path fill="#5fabd9" d="M6 0.8H10Q11.6 0.8 11.6 2.4V7.4H4.2V9.6Q4.2 11.1 2.7 11.1H2.4Q0.8 11.1 0.8 9.5V6.6Q0.8 5 2.4 5H4.4V2.4Q4.4 0.8 6 0.8ZM10 15.2H6Q4.4 15.2 4.4 13.6V8.6H11.8V6.4Q11.8 4.9 13.3 4.9H13.6Q15.2 4.9 15.2 6.5V9.4Q15.2 11 13.6 11H11.6V13.6Q11.6 15.2 10 15.2Z"/></svg><div class="t" style="left:253px;top:166.92px;font-size:11.5px;color:#a9a9a9;font-weight:400;letter-spacing:0px;">Ejercicio3.py</div><svg style="left:322px;top:168px" width="6" height="9" viewBox="0 0 6 9"><path d="M0.8 0.8L5 4.5 0.8 8.2" stroke="#a9a9a9" stroke-width="1" fill="none"/></svg><div class="t" style="left:331px;top:166.92px;font-size:11.5px;color:#a9a9a9;font-weight:400;letter-spacing:0px;">...</div><div class="a" style="left:280px;top:199.01000000000002px;width:27.848px;height:17.41px;background:#2d2c20;"></div><div class="a" style="left:280px;top:216.22000000000003px;width:27.848px;height:17.41px;background:#2d2c20;"></div><div class="a" style="left:280px;top:233.43px;width:27.848px;height:17.41px;background:#2d2c20;"></div><div class="a" style="left:280px;top:250.64000000000001px;width:27.848px;height:17.41px;background:#2d2c20;"></div><div class="a" style="left:280px;top:267.85px;width:27.848px;height:17.41px;background:#2d2c20;"></div><div class="a" style="left:280px;top:285.06px;width:27.848px;height:17.41px;background:#2d2c20;"></div><div class="a" style="left:280px;top:302.27px;width:27.848px;height:17.41px;background:#2d2c20;"></div><div class="a" style="left:307.848px;top:216.22000000000003px;width:27.848px;height:17.41px;background:#222b22;"></div><div class="a" style="left:307.848px;top:250.64000000000001px;width:27.848px;height:17.41px;background:#222b22;"></div><div class="a" style="left:307.848px;top:285.06px;width:27.848px;height:17.41px;background:#222b22;"></div><div class="a" style="left:280px;top:423.54px;width:814px;height:16.01px;background:transparent;border-top:1px solid #2c2c2c;border-bottom:1px solid #2c2c2c"></div><div class="code ln" style="left:250.00px;top:183.80px;color:#7a8088">1</div><div class="code" style="left:280px;top:184.00px"><span style="color:#569cd6">def</span><span style="color:#cccccc"> </span><span style="color:#dcdcaa">calcular</span><span style="color:#dcdcaa">_</span><span style="color:#dcdcaa">pulsaciones</span><span style="color:#ffd700">(</span><span style="color:#9cdcfe">sexo</span><span style="color:#cccccc">, </span><span style="color:#9cdcfe">edad</span><span style="color:#ffd700">)</span><span style="color:#cccccc">:</span></div><svg style="left:307.85px;top:196.01px;overflow:hidden" width="55.70" height="3.2" viewBox="0 0 55.70 3.2"><path d="M0 2.7 l1.81 -1.81 l0.9 0 l1.81 1.81 l0.9 0 l1.81 -1.81 l0.9 0 l1.81 1.81 l0.9 0 l1.81 -1.81 l0.9 0 l1.81 1.81 l0.9 0 l1.81 -1.81 l0.9 0 l1.81 1.81 l0.9 0 l1.81 -1.81 l0.9 0 l1.81 1.81 l0.9 0 l1.81 -1.81 l0.9 0 l1.81 1.81 l0.9 0 l1.81 -1.81 l0.9 0 l1.81 1.81 l0.9 0 l1.81 -1.81 l0.9 0 l1.81 1.81 l0.9 0 l1.81 -1.81 l0.9 0 l1.81 1.81 l0.9 0 l1.81 -1.81 l0.9 0 l1.81 1.81 l0.9 0 l1.81 -1.81 l0.9 0 l1.81 1.81 l0.9 0" stroke="#3794ff" stroke-width="1" fill="none" transform="translate(0 0.2)"/></svg><svg style="left:370.51px;top:196.01px;overflow:hidden" width="76.58" height="3.2" viewBox="0 0 76.58 3.2"><path d="M0 2.7 l1.81 -1.81 l0.9 0 l1.81 1.81 l0.9 0 l1.81 -1.81 l0.9 0 l1.81 1.81 l0.9 0 l1.81 -1.81 l0.9 0 l1.81 1.81 l0.9 0 l1.81 -1.81 l0.9 0 l1.81 1.81 l0.9 0 l1.81 -1.81 l0.9 0 l1.81 1.81 l0.9 0 l1.81 -1.81 l0.9 0 l1.81 1.81 l0.9 0 l1.81 -1.81 l0.9 0 l1.81 1.81 l0.9 0 l1.81 -1.81 l0.9 0 l1.81 1.81 l0.9 0 l1.81 -1.81 l0.9 0 l1.81 1.81 l0.9 0 l1.81 -1.81 l0.9 0 l1.81 1.81 l0.9 0 l1.81 -1.81 l0.9 0 l1.81 1.81 l0.9 0 l1.81 -1.81 l0.9 0 l1.81 1.81 l0.9 0 l1.81 -1.81 l0.9 0 l1.81 1.81 l0.9 0 l1.81 -1.81 l0.9 0 l1.81 1.81 l0.9 0 l1.81 -1.81 l0.9 0 l1.81 1.81 l0.9 0" stroke="#3794ff" stroke-width="1" fill="none" transform="translate(0 0.2)"/></svg><svg style="left:454.05px;top:196.01px;overflow:hidden" width="27.85" height="3.2" viewBox="0 0 27.85 3.2"><path d="M0 2.7 l1.81 -1.81 l0.9 0 l1.81 1.81 l0.9 0 l1.81 -1.81 l0.9 0 l1.81 1.81 l0.9 0 l1.81 -1.81 l0.9 0 l1.81 1.81 l0.9 0 l1.81 -1.81 l0.9 0 l1.81 1.81 l0.9 0 l1.81 -1.81 l0.9 0 l1.81 1.81 l0.9 0 l1.81 -1.81 l0.9 0 l1.81 1.81 l0.9 0" stroke="#3794ff" stroke-width="1" fill="none" transform="translate(0 0.2)"/></svg><svg style="left:495.82px;top:196.01px;overflow:hidden" width="27.85" height="3.2" viewBox="0 0 27.85 3.2"><path d="M0 2.7 l1.81 -1.81 l0.9 0 l1.81 1.81 l0.9 0 l1.81 -1.81 l0.9 0 l1.81 1.81 l0.9 0 l1.81 -1.81 l0.9 0 l1.81 1.81 l0.9 0 l1.81 -1.81 l0.9 0 l1.81 1.81 l0.9 0 l1.81 -1.81 l0.9 0 l1.81 1.81 l0.9 0 l1.81 -1.81 l0.9 0 l1.81 1.81 l0.9 0" stroke="#3794ff" stroke-width="1" fill="none" transform="translate(0 0.2)"/></svg><div class="code ln" style="left:250.00px;top:201.01px;color:#7a8088">2</div><div class="code" style="left:280px;top:201.21px"><span style="color:#cccccc">    </span><span style="color:#c586c0">if</span><span style="color:#cccccc"> </span><span style="color:#9cdcfe">sexo</span><span style="color:#cccccc"> == </span><span style="color:#ce9178">&#x27;</span><span style="color:#ce9178">femenino</span><span style="color:#ce9178">&#x27;</span><span style="color:#cccccc">:</span></div><svg style="left:328.73px;top:213.22px;overflow:hidden" width="27.85" height="3.2" viewBox="0 0 27.85 3.2"><path d="M0 2.7 l1.81 -1.81 l0.9 0 l1.81 1.81 l0.9 0 l1.81 -1.81 l0.9 0 l1.81 1.81 l0.9 0 l1.81 -1.81 l0.9 0 l1.81 1.81 l0.9 0 l1.81 -1.81 l0.9 0 l1.81 1.81 l0.9 0 l1.81 -1.81 l0.9 0 l1.81 1.81 l0.9 0 l1.81 -1.81 l0.9 0 l1.81 1.81 l0.9 0" stroke="#3794ff" stroke-width="1" fill="none" transform="translate(0 0.2)"/></svg><svg style="left:391.39px;top:213.22px;overflow:hidden" width="55.70" height="3.2" viewBox="0 0 55.70 3.2"><path d="M0 2.7 l1.81 -1.81 l0.9 0 l1.81 1.81 l0.9 0 l1.81 -1.81 l0.9 0 l1.81 1.81 l0.9 0 l1.81 -1.81 l0.9 0 l1.81 1.81 l0.9 0 l1.81 -1.81 l0.9 0 l1.81 1.81 l0.9 0 l1.81 -1.81 l0.9 0 l1.81 1.81 l0.9 0 l1.81 -1.81 l0.9 0 l1.81 1.81 l0.9 0 l1.81 -1.81 l0.9 0 l1.81 1.81 l0.9 0 l1.81 -1.81 l0.9 0 l1.81 1.81 l0.9 0 l1.81 -1.81 l0.9 0 l1.81 1.81 l0.9 0 l1.81 -1.81 l0.9 0 l1.81 1.81 l0.9 0 l1.81 -1.81 l0.9 0 l1.81 1.81 l0.9 0" stroke="#3794ff" stroke-width="1" fill="none" transform="translate(0 0.2)"/></svg><div class="code ln" style="left:250.00px;top:218.22px;color:#7a8088">3</div><div class="code" style="left:280px;top:218.42px"><span style="color:#9cdcfe">        num_</span><span style="color:#9cdcfe">pulsaciones</span><span style="color:#cccccc"> = </span><span style="color:#ffd700">(</span><span style="color:#b5cea8">220</span><span style="color:#cccccc"> - </span><span style="color:#9cdcfe">edad</span><span style="color:#ffd700">)</span><span style="color:#cccccc"> / </span><span style="color:#b5cea8">10</span></div><svg style="left:363.54px;top:230.43px;overflow:hidden" width="76.58" height="3.2" viewBox="0 0 76.58 3.2"><path d="M0 2.7 l1.81 -1.81 l0.9 0 l1.81 1.81 l0.9 0 l1.81 -1.81 l0.9 0 l1.81 1.81 l0.9 0 l1.81 -1.81 l0.9 0 l1.81 1.81 l0.9 0 l1.81 -1.81 l0.9 0 l1.81 1.81 l0.9 0 l1.81 -1.81 l0.9 0 l1.81 1.81 l0.9 0 l1.81 -1.81 l0.9 0 l1.81 1.81 l0.9 0 l1.81 -1.81 l0.9 0 l1.81 1.81 l0.9 0 l1.81 -1.81 l0.9 0 l1.81 1.81 l0.9 0 l1.81 -1.81 l0.9 0 l1.81 1.81 l0.9 0 l1.81 -1.81 l0.9 0 l1.81 1.81 l0.9 0 l1.81 -1.81 l0.9 0 l1.81 1.81 l0.9 0 l1.81 -1.81 l0.9 0 l1.81 1.81 l0.9 0 l1.81 -1.81 l0.9 0 l1.81 1.81 l0.9 0 l1.81 -1.81 l0.9 0 l1.81 1.81 l0.9 0 l1.81 -1.81 l0.9 0 l1.81 1.81 l0.9 0" stroke="#3794ff" stroke-width="1" fill="none" transform="translate(0 0.2)"/></svg><svg style="left:509.75px;top:230.43px;overflow:hidden" width="27.85" height="3.2" viewBox="0 0 27.85 3.2"><path d="M0 2.7 l1.81 -1.81 l0.9 0 l1.81 1.81 l0.9 0 l1.81 -1.81 l0.9 0 l1.81 1.81 l0.9 0 l1.81 -1.81 l0.9 0 l1.81 1.81 l0.9 0 l1.81 -1.81 l0.9 0 l1.81 1.81 l0.9 0 l1.81 -1.81 l0.9 0 l1.81 1.81 l0.9 0 l1.81 -1.81 l0.9 0 l1.81 1.81 l0.9 0" stroke="#3794ff" stroke-width="1" fill="none" transform="translate(0 0.2)"/></svg><div class="code ln" style="left:250.00px;top:235.43px;color:#7a8088">4</div><div class="code" style="left:280px;top:235.63px"><span style="color:#cccccc">    </span><span style="color:#c586c0">elif</span><span style="color:#cccccc"> </span><span style="color:#9cdcfe">sexo</span><span style="color:#cccccc"> == </span><span style="color:#ce9178">&#x27;</span><span style="color:#ce9178">masculino</span><span style="color:#ce9178">&#x27;</span><span style="color:#cccccc">:</span></div><svg style="left:342.66px;top:247.64px;overflow:hidden" width="27.85" height="3.2" viewBox="0 0 27.85 3.2"><path d="M0 2.7 l1.81 -1.81 l0.9 0 l1.81 1.81 l0.9 0 l1.81 -1.81 l0.9 0 l1.81 1.81 l0.9 0 l1.81 -1.81 l0.9 0 l1.81 1.81 l0.9 0 l1.81 -1.81 l0.9 0 l1.81 1.81 l0.9 0 l1.81 -1.81 l0.9 0 l1.81 1.81 l0.9 0 l1.81 -1.81 l0.9 0 l1.81 1.81 l0.9 0" stroke="#3794ff" stroke-width="1" fill="none" transform="translate(0 0.2)"/></svg><svg style="left:405.32px;top:247.64px;overflow:hidden" width="62.66" height="3.2" viewBox="0 0 62.66 3.2"><path d="M0 2.7 l1.81 -1.81 l0.9 0 l1.81 1.81 l0.9 0 l1.81 -1.81 l0.9 0 l1.81 1.81 l0.9 0 l1.81 -1.81 l0.9 0 l1.81 1.81 l0.9 0 l1.81 -1.81 l0.9 0 l1.81 1.81 l0.9 0 l1.81 -1.81 l0.9 0 l1.81 1.81 l0.9 0 l1.81 -1.81 l0.9 0 l1.81 1.81 l0.9 0 l1.81 -1.81 l0.9 0 l1.81 1.81 l0.9 0 l1.81 -1.81 l0.9 0 l1.81 1.81 l0.9 0 l1.81 -1.81 l0.9 0 l1.81 1.81 l0.9 0 l1.81 -1.81 l0.9 0 l1.81 1.81 l0.9 0 l1.81 -1.81 l0.9 0 l1.81 1.81 l0.9 0 l1.81 -1.81 l0.9 0 l1.81 1.81 l0.9 0" stroke="#3794ff" stroke-width="1" fill="none" transform="translate(0 0.2)"/></svg><div class="code ln" style="left:250.00px;top:252.64px;color:#7a8088">5</div><div class="code" style="left:280px;top:252.84px"><span style="color:#9cdcfe">        num_</span><span style="color:#9cdcfe">pulsaciones</span><span style="color:#cccccc"> = </span><span style="color:#ffd700">(</span><span style="color:#b5cea8">210</span><span style="color:#cccccc"> - </span><span style="color:#9cdcfe">edad</span><span style="color:#ffd700">)</span><span style="color:#cccccc"> / </span><span style="color:#b5cea8">10</span></div><svg style="left:363.54px;top:264.85px;overflow:hidden" width="76.58" height="3.2" viewBox="0 0 76.58 3.2"><path d="M0 2.7 l1.81 -1.81 l0.9 0 l1.81 1.81 l0.9 0 l1.81 -1.81 l0.9 0 l1.81 1.81 l0.9 0 l1.81 -1.81 l0.9 0 l1.81 1.81 l0.9 0 l1.81 -1.81 l0.9 0 l1.81 1.81 l0.9 0 l1.81 -1.81 l0.9 0 l1.81 1.81 l0.9 0 l1.81 -1.81 l0.9 0 l1.81 1.81 l0.9 0 l1.81 -1.81 l0.9 0 l1.81 1.81 l0.9 0 l1.81 -1.81 l0.9 0 l1.81 1.81 l0.9 0 l1.81 -1.81 l0.9 0 l1.81 1.81 l0.9 0 l1.81 -1.81 l0.9 0 l1.81 1.81 l0.9 0 l1.81 -1.81 l0.9 0 l1.81 1.81 l0.9 0 l1.81 -1.81 l0.9 0 l1.81 1.81 l0.9 0 l1.81 -1.81 l0.9 0 l1.81 1.81 l0.9 0 l1.81 -1.81 l0.9 0 l1.81 1.81 l0.9 0 l1.81 -1.81 l0.9 0 l1.81 1.81 l0.9 0" stroke="#3794ff" stroke-width="1" fill="none" transform="translate(0 0.2)"/></svg><svg style="left:509.75px;top:264.85px;overflow:hidden" width="27.85" height="3.2" viewBox="0 0 27.85 3.2"><path d="M0 2.7 l1.81 -1.81 l0.9 0 l1.81 1.81 l0.9 0 l1.81 -1.81 l0.9 0 l1.81 1.81 l0.9 0 l1.81 -1.81 l0.9 0 l1.81 1.81 l0.9 0 l1.81 -1.81 l0.9 0 l1.81 1.81 l0.9 0 l1.81 -1.81 l0.9 0 l1.81 1.81 l0.9 0 l1.81 -1.81 l0.9 0 l1.81 1.81 l0.9 0" stroke="#3794ff" stroke-width="1" fill="none" transform="translate(0 0.2)"/></svg><div class="code ln" style="left:250.00px;top:269.85px;color:#7a8088">6</div><div class="code" style="left:280px;top:270.05px"><span style="color:#cccccc">    </span><span style="color:#c586c0">else</span><span style="color:#cccccc">:</span></div><div class="code ln" style="left:250.00px;top:287.06px;color:#7a8088">7</div><div class="code" style="left:280px;top:287.26px"><span style="color:#cccccc">        </span><span style="color:#c586c0">return</span><span style="color:#cccccc"> </span><span style="color:#ce9178">&quot;</span><span style="color:#ce9178">Sexo</span><span style="color:#ce9178"> no </span><span style="color:#ce9178">válido</span><span style="color:#ce9178">&quot;</span></div><svg style="left:391.39px;top:299.27px;overflow:hidden" width="27.85" height="3.2" viewBox="0 0 27.85 3.2"><path d="M0 2.7 l1.81 -1.81 l0.9 0 l1.81 1.81 l0.9 0 l1.81 -1.81 l0.9 0 l1.81 1.81 l0.9 0 l1.81 -1.81 l0.9 0 l1.81 1.81 l0.9 0 l1.81 -1.81 l0.9 0 l1.81 1.81 l0.9 0 l1.81 -1.81 l0.9 0 l1.81 1.81 l0.9 0 l1.81 -1.81 l0.9 0 l1.81 1.81 l0.9 0" stroke="#3794ff" stroke-width="1" fill="none" transform="translate(0 0.2)"/></svg><svg style="left:447.09px;top:299.27px;overflow:hidden" width="41.77" height="3.2" viewBox="0 0 41.77 3.2"><path d="M0 2.7 l1.81 -1.81 l0.9 0 l1.81 1.81 l0.9 0 l1.81 -1.81 l0.9 0 l1.81 1.81 l0.9 0 l1.81 -1.81 l0.9 0 l1.81 1.81 l0.9 0 l1.81 -1.81 l0.9 0 l1.81 1.81 l0.9 0 l1.81 -1.81 l0.9 0 l1.81 1.81 l0.9 0 l1.81 -1.81 l0.9 0 l1.81 1.81 l0.9 0 l1.81 -1.81 l0.9 0 l1.81 1.81 l0.9 0 l1.81 -1.81 l0.9 0 l1.81 1.81 l0.9 0" stroke="#3794ff" stroke-width="1" fill="none" transform="translate(0 0.2)"/></svg><div class="code ln" style="left:250.00px;top:304.27px;color:#7a8088">8</div><div class="code" style="left:280px;top:304.47px"><span style="color:#cccccc">    </span><span style="color:#c586c0">return</span><span style="color:#9cdcfe"> num_</span><span style="color:#9cdcfe">pulsaciones</span></div><svg style="left:384.43px;top:316.48px;overflow:hidden" width="76.58" height="3.2" viewBox="0 0 76.58 3.2"><path d="M0 2.7 l1.81 -1.81 l0.9 0 l1.81 1.81 l0.9 0 l1.81 -1.81 l0.9 0 l1.81 1.81 l0.9 0 l1.81 -1.81 l0.9 0 l1.81 1.81 l0.9 0 l1.81 -1.81 l0.9 0 l1.81 1.81 l0.9 0 l1.81 -1.81 l0.9 0 l1.81 1.81 l0.9 0 l1.81 -1.81 l0.9 0 l1.81 1.81 l0.9 0 l1.81 -1.81 l0.9 0 l1.81 1.81 l0.9 0 l1.81 -1.81 l0.9 0 l1.81 1.81 l0.9 0 l1.81 -1.81 l0.9 0 l1.81 1.81 l0.9 0 l1.81 -1.81 l0.9 0 l1.81 1.81 l0.9 0 l1.81 -1.81 l0.9 0 l1.81 1.81 l0.9 0 l1.81 -1.81 l0.9 0 l1.81 1.81 l0.9 0 l1.81 -1.81 l0.9 0 l1.81 1.81 l0.9 0 l1.81 -1.81 l0.9 0 l1.81 1.81 l0.9 0 l1.81 -1.81 l0.9 0 l1.81 1.81 l0.9 0" stroke="#3794ff" stroke-width="1" fill="none" transform="translate(0 0.2)"/></svg><div class="code ln" style="left:250.00px;top:321.48px;color:#7a8088">9</div><div class="code ln" style="left:243.50px;top:338.69px;color:#7a8088">10</div><div class="code" style="left:280px;top:338.89px"><span style="color:#9cdcfe">sexo</span><span style="color:#cccccc"> = </span><span style="color:#dcdcaa">input</span><span style="color:#ffd700">(</span><span style="color:#ce9178">&quot;</span><span style="color:#ce9178">Ingrese</span><span style="color:#ce9178"> el </span><span style="color:#ce9178">sexo</span><span style="color:#ce9178"> (</span><span style="color:#ce9178">femenino</span><span style="color:#ce9178">/</span><span style="color:#ce9178">masculino</span><span style="color:#ce9178">): &quot;</span><span style="color:#ffd700">)</span><span style="color:#cccccc">.</span><span style="color:#dcdcaa">lower</span><span style="color:#ffd700">()</span></div><svg style="left:280.00px;top:350.90px;overflow:hidden" width="27.85" height="3.2" viewBox="0 0 27.85 3.2"><path d="M0 2.7 l1.81 -1.81 l0.9 0 l1.81 1.81 l0.9 0 l1.81 -1.81 l0.9 0 l1.81 1.81 l0.9 0 l1.81 -1.81 l0.9 0 l1.81 1.81 l0.9 0 l1.81 -1.81 l0.9 0 l1.81 1.81 l0.9 0 l1.81 -1.81 l0.9 0 l1.81 1.81 l0.9 0 l1.81 -1.81 l0.9 0 l1.81 1.81 l0.9 0" stroke="#3794ff" stroke-width="1" fill="none" transform="translate(0 0.2)"/></svg><svg style="left:377.47px;top:350.90px;overflow:hidden" width="48.73" height="3.2" viewBox="0 0 48.73 3.2"><path d="M0 2.7 l1.81 -1.81 l0.9 0 l1.81 1.81 l0.9 0 l1.81 -1.81 l0.9 0 l1.81 1.81 l0.9 0 l1.81 -1.81 l0.9 0 l1.81 1.81 l0.9 0 l1.81 -1.81 l0.9 0 l1.81 1.81 l0.9 0 l1.81 -1.81 l0.9 0 l1.81 1.81 l0.9 0 l1.81 -1.81 l0.9 0 l1.81 1.81 l0.9 0 l1.81 -1.81 l0.9 0 l1.81 1.81 l0.9 0 l1.81 -1.81 l0.9 0 l1.81 1.81 l0.9 0 l1.81 -1.81 l0.9 0 l1.81 1.81 l0.9 0" stroke="#3794ff" stroke-width="1" fill="none" transform="translate(0 0.2)"/></svg><svg style="left:454.05px;top:350.90px;overflow:hidden" width="27.85" height="3.2" viewBox="0 0 27.85 3.2"><path d="M0 2.7 l1.81 -1.81 l0.9 0 l1.81 1.81 l0.9 0 l1.81 -1.81 l0.9 0 l1.81 1.81 l0.9 0 l1.81 -1.81 l0.9 0 l1.81 1.81 l0.9 0 l1.81 -1.81 l0.9 0 l1.81 1.81 l0.9 0 l1.81 -1.81 l0.9 0 l1.81 1.81 l0.9 0 l1.81 -1.81 l0.9 0 l1.81 1.81 l0.9 0" stroke="#3794ff" stroke-width="1" fill="none" transform="translate(0 0.2)"/></svg><svg style="left:495.82px;top:350.90px;overflow:hidden" width="55.70" height="3.2" viewBox="0 0 55.70 3.2"><path d="M0 2.7 l1.81 -1.81 l0.9 0 l1.81 1.81 l0.9 0 l1.81 -1.81 l0.9 0 l1.81 1.81 l0.9 0 l1.81 -1.81 l0.9 0 l1.81 1.81 l0.9 0 l1.81 -1.81 l0.9 0 l1.81 1.81 l0.9 0 l1.81 -1.81 l0.9 0 l1.81 1.81 l0.9 0 l1.81 -1.81 l0.9 0 l1.81 1.81 l0.9 0 l1.81 -1.81 l0.9 0 l1.81 1.81 l0.9 0 l1.81 -1.81 l0.9 0 l1.81 1.81 l0.9 0 l1.81 -1.81 l0.9 0 l1.81 1.81 l0.9 0 l1.81 -1.81 l0.9 0 l1.81 1.81 l0.9 0 l1.81 -1.81 l0.9 0 l1.81 1.81 l0.9 0" stroke="#3794ff" stroke-width="1" fill="none" transform="translate(0 0.2)"/></svg><svg style="left:558.48px;top:350.90px;overflow:hidden" width="62.66" height="3.2" viewBox="0 0 62.66 3.2"><path d="M0 2.7 l1.81 -1.81 l0.9 0 l1.81 1.81 l0.9 0 l1.81 -1.81 l0.9 0 l1.81 1.81 l0.9 0 l1.81 -1.81 l0.9 0 l1.81 1.81 l0.9 0 l1.81 -1.81 l0.9 0 l1.81 1.81 l0.9 0 l1.81 -1.81 l0.9 0 l1.81 1.81 l0.9 0 l1.81 -1.81 l0.9 0 l1.81 1.81 l0.9 0 l1.81 -1.81 l0.9 0 l1.81 1.81 l0.9 0 l1.81 -1.81 l0.9 0 l1.81 1.81 l0.9 0 l1.81 -1.81 l0.9 0 l1.81 1.81 l0.9 0 l1.81 -1.81 l0.9 0 l1.81 1.81 l0.9 0 l1.81 -1.81 l0.9 0 l1.81 1.81 l0.9 0 l1.81 -1.81 l0.9 0 l1.81 1.81 l0.9 0" stroke="#3794ff" stroke-width="1" fill="none" transform="translate(0 0.2)"/></svg><div class="code ln" style="left:243.50px;top:355.90px;color:#7a8088">11</div><div class="code" style="left:280px;top:356.10px"><span style="color:#9cdcfe">edad</span><span style="color:#cccccc"> = </span><span style="color:#4ec9b0">int</span><span style="color:#ffd700">(</span><span style="color:#dcdcaa">input</span><span style="color:#da70d6">(</span><span style="color:#ce9178">&quot;</span><span style="color:#ce9178">Ingrese</span><span style="color:#ce9178"> la </span><span style="color:#ce9178">edad</span><span style="color:#ce9178">: &quot;</span><span style="color:#da70d6">)</span><span style="color:#ffd700">)</span></div><svg style="left:280.00px;top:368.11px;overflow:hidden" width="27.85" height="3.2" viewBox="0 0 27.85 3.2"><path d="M0 2.7 l1.81 -1.81 l0.9 0 l1.81 1.81 l0.9 0 l1.81 -1.81 l0.9 0 l1.81 1.81 l0.9 0 l1.81 -1.81 l0.9 0 l1.81 1.81 l0.9 0 l1.81 -1.81 l0.9 0 l1.81 1.81 l0.9 0 l1.81 -1.81 l0.9 0 l1.81 1.81 l0.9 0 l1.81 -1.81 l0.9 0 l1.81 1.81 l0.9 0" stroke="#3794ff" stroke-width="1" fill="none" transform="translate(0 0.2)"/></svg><svg style="left:405.32px;top:368.11px;overflow:hidden" width="48.73" height="3.2" viewBox="0 0 48.73 3.2"><path d="M0 2.7 l1.81 -1.81 l0.9 0 l1.81 1.81 l0.9 0 l1.81 -1.81 l0.9 0 l1.81 1.81 l0.9 0 l1.81 -1.81 l0.9 0 l1.81 1.81 l0.9 0 l1.81 -1.81 l0.9 0 l1.81 1.81 l0.9 0 l1.81 -1.81 l0.9 0 l1.81 1.81 l0.9 0 l1.81 -1.81 l0.9 0 l1.81 1.81 l0.9 0 l1.81 -1.81 l0.9 0 l1.81 1.81 l0.9 0 l1.81 -1.81 l0.9 0 l1.81 1.81 l0.9 0 l1.81 -1.81 l0.9 0 l1.81 1.81 l0.9 0" stroke="#3794ff" stroke-width="1" fill="none" transform="translate(0 0.2)"/></svg><svg style="left:481.90px;top:368.11px;overflow:hidden" width="27.85" height="3.2" viewBox="0 0 27.85 3.2"><path d="M0 2.7 l1.81 -1.81 l0.9 0 l1.81 1.81 l0.9 0 l1.81 -1.81 l0.9 0 l1.81 1.81 l0.9 0 l1.81 -1.81 l0.9 0 l1.81 1.81 l0.9 0 l1.81 -1.81 l0.9 0 l1.81 1.81 l0.9 0 l1.81 -1.81 l0.9 0 l1.81 1.81 l0.9 0 l1.81 -1.81 l0.9 0 l1.81 1.81 l0.9 0" stroke="#3794ff" stroke-width="1" fill="none" transform="translate(0 0.2)"/></svg><div class="code ln" style="left:243.50px;top:373.11px;color:#7a8088">12</div><div class="code ln" style="left:243.50px;top:390.32px;color:#7a8088">13</div><div class="code" style="left:280px;top:390.52px"><span style="color:#9cdcfe">pulsaciones</span><span style="color:#9cdcfe">_por_10_</span><span style="color:#9cdcfe">segundos</span><span style="color:#cccccc"> = </span><span style="color:#dcdcaa">calcular</span><span style="color:#dcdcaa">_</span><span style="color:#dcdcaa">pulsaciones</span><span style="color:#ffd700">(</span><span style="color:#9cdcfe">sexo</span><span style="color:#cccccc">, </span><span style="color:#9cdcfe">edad</span><span style="color:#ffd700">)</span></div><svg style="left:280.00px;top:402.53px;overflow:hidden" width="76.58" height="3.2" viewBox="0 0 76.58 3.2"><path d="M0 2.7 l1.81 -1.81 l0.9 0 l1.81 1.81 l0.9 0 l1.81 -1.81 l0.9 0 l1.81 1.81 l0.9 0 l1.81 -1.81 l0.9 0 l1.81 1.81 l0.9 0 l1.81 -1.81 l0.9 0 l1.81 1.81 l0.9 0 l1.81 -1.81 l0.9 0 l1.81 1.81 l0.9 0 l1.81 -1.81 l0.9 0 l1.81 1.81 l0.9 0 l1.81 -1.81 l0.9 0 l1.81 1.81 l0.9 0 l1.81 -1.81 l0.9 0 l1.81 1.81 l0.9 0 l1.81 -1.81 l0.9 0 l1.81 1.81 l0.9 0 l1.81 -1.81 l0.9 0 l1.81 1.81 l0.9 0 l1.81 -1.81 l0.9 0 l1.81 1.81 l0.9 0 l1.81 -1.81 l0.9 0 l1.81 1.81 l0.9 0 l1.81 -1.81 l0.9 0 l1.81 1.81 l0.9 0 l1.81 -1.81 l0.9 0 l1.81 1.81 l0.9 0 l1.81 -1.81 l0.9 0 l1.81 1.81 l0.9 0" stroke="#3794ff" stroke-width="1" fill="none" transform="translate(0 0.2)"/></svg><svg style="left:412.28px;top:402.53px;overflow:hidden" width="55.70" height="3.2" viewBox="0 0 55.70 3.2"><path d="M0 2.7 l1.81 -1.81 l0.9 0 l1.81 1.81 l0.9 0 l1.81 -1.81 l0.9 0 l1.81 1.81 l0.9 0 l1.81 -1.81 l0.9 0 l1.81 1.81 l0.9 0 l1.81 -1.81 l0.9 0 l1.81 1.81 l0.9 0 l1.81 -1.81 l0.9 0 l1.81 1.81 l0.9 0 l1.81 -1.81 l0.9 0 l1.81 1.81 l0.9 0 l1.81 -1.81 l0.9 0 l1.81 1.81 l0.9 0 l1.81 -1.81 l0.9 0 l1.81 1.81 l0.9 0 l1.81 -1.81 l0.9 0 l1.81 1.81 l0.9 0 l1.81 -1.81 l0.9 0 l1.81 1.81 l0.9 0 l1.81 -1.81 l0.9 0 l1.81 1.81 l0.9 0" stroke="#3794ff" stroke-width="1" fill="none" transform="translate(0 0.2)"/></svg><svg style="left:488.86px;top:402.53px;overflow:hidden" width="55.70" height="3.2" viewBox="0 0 55.70 3.2"><path d="M0 2.7 l1.81 -1.81 l0.9 0 l1.81 1.81 l0.9 0 l1.81 -1.81 l0.9 0 l1.81 1.81 l0.9 0 l1.81 -1.81 l0.9 0 l1.81 1.81 l0.9 0 l1.81 -1.81 l0.9 0 l1.81 1.81 l0.9 0 l1.81 -1.81 l0.9 0 l1.81 1.81 l0.9 0 l1.81 -1.81 l0.9 0 l1.81 1.81 l0.9 0 l1.81 -1.81 l0.9 0 l1.81 1.81 l0.9 0 l1.81 -1.81 l0.9 0 l1.81 1.81 l0.9 0 l1.81 -1.81 l0.9 0 l1.81 1.81 l0.9 0 l1.81 -1.81 l0.9 0 l1.81 1.81 l0.9 0 l1.81 -1.81 l0.9 0 l1.81 1.81 l0.9 0" stroke="#3794ff" stroke-width="1" fill="none" transform="translate(0 0.2)"/></svg><div class="code ln" style="left:243.50px;top:407.53px;color:#7a8088">14</div><div class="code" style="left:280px;top:407.73px"><span style="color:#dcdcaa">print</span><span style="color:#ffd700">(</span><span style="color:#569cd6">f</span><span style="color:#ce9178">&quot;El </span><span style="color:#ce9178">número</span><span style="color:#ce9178"> de pulsaciones por </span><span style="color:#ce9178">cada</span><span style="color:#ce9178"> 10 </span><span style="color:#ce9178">segundos</span><span style="color:#ce9178"> de </span><span style="color:#ce9178">ejercicio</span><span style="color:#ce9178"> es: </span><span style="color:#da70d6">{</span><span style="color:#9cdcfe">pulsaciones_por_10_</span><span style="color:#9cdcfe">segundos</span><span style="color:#da70d6">}</span><span style="color:#ce9178">&quot;</span><span style="color:#ffd700">)</span></div><svg style="left:356.58px;top:419.74px;overflow:hidden" width="41.77" height="3.2" viewBox="0 0 41.77 3.2"><path d="M0 2.7 l1.81 -1.81 l0.9 0 l1.81 1.81 l0.9 0 l1.81 -1.81 l0.9 0 l1.81 1.81 l0.9 0 l1.81 -1.81 l0.9 0 l1.81 1.81 l0.9 0 l1.81 -1.81 l0.9 0 l1.81 1.81 l0.9 0 l1.81 -1.81 l0.9 0 l1.81 1.81 l0.9 0 l1.81 -1.81 l0.9 0 l1.81 1.81 l0.9 0 l1.81 -1.81 l0.9 0 l1.81 1.81 l0.9 0 l1.81 -1.81 l0.9 0 l1.81 1.81 l0.9 0" stroke="#3794ff" stroke-width="1" fill="none" transform="translate(0 0.2)"/></svg><svg style="left:537.59px;top:419.74px;overflow:hidden" width="27.85" height="3.2" viewBox="0 0 27.85 3.2"><path d="M0 2.7 l1.81 -1.81 l0.9 0 l1.81 1.81 l0.9 0 l1.81 -1.81 l0.9 0 l1.81 1.81 l0.9 0 l1.81 -1.81 l0.9 0 l1.81 1.81 l0.9 0 l1.81 -1.81 l0.9 0 l1.81 1.81 l0.9 0 l1.81 -1.81 l0.9 0 l1.81 1.81 l0.9 0 l1.81 -1.81 l0.9 0 l1.81 1.81 l0.9 0" stroke="#3794ff" stroke-width="1" fill="none" transform="translate(0 0.2)"/></svg><svg style="left:593.29px;top:419.74px;overflow:hidden" width="55.70" height="3.2" viewBox="0 0 55.70 3.2"><path d="M0 2.7 l1.81 -1.81 l0.9 0 l1.81 1.81 l0.9 0 l1.81 -1.81 l0.9 0 l1.81 1.81 l0.9 0 l1.81 -1.81 l0.9 0 l1.81 1.81 l0.9 0 l1.81 -1.81 l0.9 0 l1.81 1.81 l0.9 0 l1.81 -1.81 l0.9 0 l1.81 1.81 l0.9 0 l1.81 -1.81 l0.9 0 l1.81 1.81 l0.9 0 l1.81 -1.81 l0.9 0 l1.81 1.81 l0.9 0 l1.81 -1.81 l0.9 0 l1.81 1.81 l0.9 0 l1.81 -1.81 l0.9 0 l1.81 1.81 l0.9 0 l1.81 -1.81 l0.9 0 l1.81 1.81 l0.9 0 l1.81 -1.81 l0.9 0 l1.81 1.81 l0.9 0" stroke="#3794ff" stroke-width="1" fill="none" transform="translate(0 0.2)"/></svg><svg style="left:676.83px;top:419.74px;overflow:hidden" width="62.66" height="3.2" viewBox="0 0 62.66 3.2"><path d="M0 2.7 l1.81 -1.81 l0.9 0 l1.81 1.81 l0.9 0 l1.81 -1.81 l0.9 0 l1.81 1.81 l0.9 0 l1.81 -1.81 l0.9 0 l1.81 1.81 l0.9 0 l1.81 -1.81 l0.9 0 l1.81 1.81 l0.9 0 l1.81 -1.81 l0.9 0 l1.81 1.81 l0.9 0 l1.81 -1.81 l0.9 0 l1.81 1.81 l0.9 0 l1.81 -1.81 l0.9 0 l1.81 1.81 l0.9 0 l1.81 -1.81 l0.9 0 l1.81 1.81 l0.9 0 l1.81 -1.81 l0.9 0 l1.81 1.81 l0.9 0 l1.81 -1.81 l0.9 0 l1.81 1.81 l0.9 0 l1.81 -1.81 l0.9 0 l1.81 1.81 l0.9 0 l1.81 -1.81 l0.9 0 l1.81 1.81 l0.9 0" stroke="#3794ff" stroke-width="1" fill="none" transform="translate(0 0.2)"/></svg><svg style="left:913.54px;top:419.74px;overflow:hidden" width="55.70" height="3.2" viewBox="0 0 55.70 3.2"><path d="M0 2.7 l1.81 -1.81 l0.9 0 l1.81 1.81 l0.9 0 l1.81 -1.81 l0.9 0 l1.81 1.81 l0.9 0 l1.81 -1.81 l0.9 0 l1.81 1.81 l0.9 0 l1.81 -1.81 l0.9 0 l1.81 1.81 l0.9 0 l1.81 -1.81 l0.9 0 l1.81 1.81 l0.9 0 l1.81 -1.81 l0.9 0 l1.81 1.81 l0.9 0 l1.81 -1.81 l0.9 0 l1.81 1.81 l0.9 0 l1.81 -1.81 l0.9 0 l1.81 1.81 l0.9 0 l1.81 -1.81 l0.9 0 l1.81 1.81 l0.9 0 l1.81 -1.81 l0.9 0 l1.81 1.81 l0.9 0 l1.81 -1.81 l0.9 0 l1.81 1.81 l0.9 0" stroke="#3794ff" stroke-width="1" fill="none" transform="translate(0 0.2)"/></svg><div class="code ln" style="left:243.50px;top:424.74px;color:#d4d4d4">15</div><div class="a" style="left:280px;top:423.04px;width:2px;height:16.91px;background:#d6d6d6;"></div><div class="a" style="left:1098px;top:182px;width:68px;height:6.2px;background:#3466ab;"></div><div class="a" style="left:1098px;top:189px;width:68px;height:3px;background:#3466ab;"></div><div class="a" style="left:1098px;top:193px;width:68px;height:2.2px;background:#3466ab;"></div><div class="a" style="left:1098px;top:196px;width:68px;height:3px;background:#3466ab;"></div><div class="a" style="left:1099px;top:183px;width:4px;height:3px;background:#6a9ee0;"></div><div class="a" style="left:1104px;top:183px;width:3px;height:3px;background:#6a9ee0;"></div><div class="a" style="left:1108px;top:183px;width:2px;height:2px;background:#6a9ee0;"></div><div class="a" style="left:1111px;top:184px;width:3px;height:3px;background:#6a9ee0;"></div><div class="a" style="left:1116px;top:183px;width:2px;height:4px;background:#6a9ee0;"></div><div class="a" style="left:1119px;top:185px;width:2px;height:2px;background:#6a9ee0;"></div><div class="a" style="left:1123px;top:184px;width:1px;height:3px;background:#6a9ee0;"></div><div class="a" style="left:1099px;top:190px;width:18px;height:1.5px;background:#6a9ee0;"></div><div class="a" style="left:1099px;top:193.3px;width:28px;height:1.2px;background:#6a9ee0;"></div><div class="a" style="left:1099px;top:196.5px;width:38px;height:1.5px;background:#6a9ee0;"></div><div class="a" style="left:1140px;top:197px;width:20px;height:1px;background:#6a9ee0;"></div><div class="a" style="left:1166px;top:181px;width:1.2px;height:549px;background:#141414;"></div><div class="a" style="left:1174.8px;top:182.4px;width:5px;height:59.0px;background:#3794ff;"></div><div class="a" style="left:1174.8px;top:253px;width:5px;height:23.69999999999999px;background:#3794ff;"></div><div class="a" style="left:1174.8px;top:289px;width:5px;height:24px;background:#3794ff;"></div><div class="a" style="left:1174.8px;top:324.6px;width:5px;height:22.899999999999977px;background:#3794ff;"></div><div class="a" style="left:1167px;top:348px;width:12px;height:1.5px;background:#a0a0a0;"></div><svg style="left:32px;top:733.5px" width="10" height="11" viewBox="0 0 10 11"><path d="M1 3.3L4.2 6.6 1 9.9M8.6 0.8L5.5 4 8.6 7.2" stroke="#ffffff" stroke-width="1.1" fill="none"/></svg><svg style="left:59px;top:734px" width="12" height="12" viewBox="0 0 12 12"><circle cx="6" cy="6" r="5.2" stroke="#cccccc" stroke-width="1" fill="none"/><path d="M3.8 3.8l4.4 4.4M8.2 3.8L3.8 8.2" stroke="#cccccc" stroke-width="1"/></svg><div class="t" style="left:75px;top:735.40px;font-size:10.2px;color:#cccccc;font-weight:400;letter-spacing:0px;">0</div><svg style="left:85px;top:733.5px" width="12" height="12" viewBox="0 0 12 12"><path d="M6 0.8L11.3 11H0.7z" stroke="#cccccc" stroke-width="1" fill="none" stroke-linejoin="round"/><path d="M6 4.5V8M6 9v1" stroke="#cccccc" stroke-width="1"/></svg><div class="t" style="left:100px;top:735.40px;font-size:10.2px;color:#cccccc;font-weight:400;letter-spacing:0px;">0</div><svg style="left:109px;top:734px" width="12" height="12" viewBox="0 0 12 12"><circle cx="6" cy="6" r="5.2" stroke="#cccccc" stroke-width="1" fill="none"/><path d="M6 5V9M6 3v1" stroke="#cccccc" stroke-width="1"/></svg><div class="t" style="left:124px;top:735.40px;font-size:10.2px;color:#cccccc;font-weight:400;letter-spacing:0px;">706</div><svg style="left:158px;top:734px" width="11" height="12" viewBox="0 0 11 12"><path d="M5.5 4.5V11.5M3 11.5L5.5 6 8 11.5M2.5 1.5a4 4 0 0 0 0 6M8.5 1.5a4 4 0 0 1 0 6" stroke="#cccccc" stroke-width="1" fill="none"/></svg><div class="t" style="left:172px;top:735.40px;font-size:10.2px;color:#cccccc;font-weight:400;letter-spacing:0px;">0</div><div class="t" style="left:659px;top:735.40px;font-size:10.2px;color:#cccccc;font-weight:400;letter-spacing:0px;">Lín. 15, col. 1</div><div class="t" style="left:735.6px;top:735.40px;font-size:10.2px;color:#cccccc;font-weight:400;letter-spacing:0px;">Espacios: 4</div><div class="t" style="left:801px;top:735.40px;font-size:10.2px;color:#cccccc;font-weight:400;letter-spacing:0px;">UTF-8</div><div class="t" style="left:845px;top:735.40px;font-size:10.2px;color:#cccccc;font-weight:400;letter-spacing:0px;">CRLF</div><div class="t" style="left:899px;top:735.40px;font-size:10.2px;color:#cccccc;font-weight:400;letter-spacing:0px;">Python</div><div class="t" style="left:944.7px;top:735.40px;font-size:10.2px;color:#cccccc;font-weight:400;letter-spacing:0px;">3.12.3 64-bit</div><div class="t" style="left:1035.5px;top:735.40px;font-size:10.2px;color:#cccccc;font-weight:400;letter-spacing:0px;">Go Live</div><div class="t" style="left:1100.5px;top:735.40px;font-size:10.2px;color:#cccccc;font-weight:400;letter-spacing:0px;">31 Spell</div><svg style="left:882px;top:734px" width="11" height="12" viewBox="0 0 11 12"><path d="M3 1C1.5 1 1.5 2 1.5 3.5S.5 6 .5 6s1 0 1 2.5S1.5 11 3 11M8 1c1.5 0 1.5 1 1.5 2.5S10.5 6 10.5 6s-1 0-1 2.5S9.5 11 8 11" stroke="#cccccc" stroke-width="1" fill="none"/><circle cx="6" cy="8" r="2" fill="#cccccc"/></svg><svg style="left:1021px;top:734px" width="11" height="11" viewBox="0 0 11 11"><circle cx="5.5" cy="5.5" r="4.8" stroke="#cccccc" stroke-width="1" fill="none"/><path d="M3 4.5l2.5-2 2.5 2M3 6.5l2.5 2 2.5-2" stroke="#cccccc" stroke-width="1" fill="none"/></svg><svg style="left:1086px;top:733.5px" width="12" height="12" viewBox="0 0 12 12"><path d="M6 0.8L11.3 11H0.7z" stroke="#cccccc" stroke-width="1" fill="none" stroke-linejoin="round"/><path d="M6 4.5V8M6 9v1" stroke="#cccccc" stroke-width="1"/></svg><svg style="left:1154px;top:734px" width="10" height="12" viewBox="0 0 10 12"><path d="M5 1a3.5 3.5 0 0 0-3.5 3.5V8L.5 9.5h9L8.5 8V4.5A3.5 3.5 0 0 0 5 1zM3.8 10.5a1.2 1.2 0 0 0 2.4 0" stroke="#cccccc" stroke-width="1" fill="none"/></svg></body></html>
